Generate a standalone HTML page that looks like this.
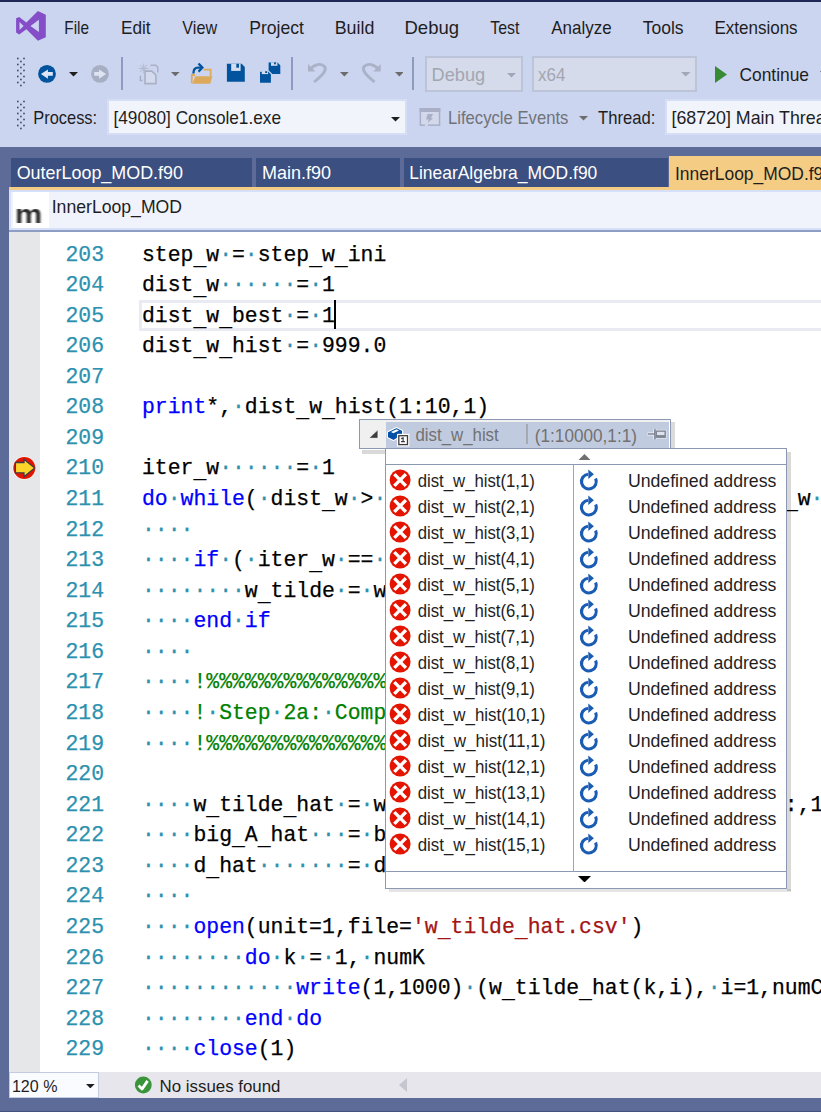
<!DOCTYPE html><html><head><meta charset="utf-8"><style>
*{margin:0;padding:0;box-sizing:border-box}
html,body{width:821px;height:1112px;overflow:hidden;background:#ccd5f0;font-family:"Liberation Sans",sans-serif;position:relative}
.a{position:absolute}
.ui{position:absolute;font-family:"Liberation Sans",sans-serif;font-size:17.4px;line-height:20px;color:#1e1e1e;white-space:pre}
.code{position:absolute;left:142.0px;font-family:"Liberation Mono",monospace;font-size:21.433px;line-height:30.57px;white-space:pre;color:#000}
.ln{position:absolute;left:0;width:104px;text-align:right;font-family:"Liberation Mono",monospace;font-size:21.433px;line-height:30.57px;color:#2b91af;white-space:pre}
.d{color:#2b91af}
.k{color:#0000ff}
.c{color:#008000}
.s{color:#a31515}
.u{position:relative;top:4px}
.code,.ln{-webkit-text-stroke:0.25px currentColor}
</style></head><body><div class="a" style="left:0px;top:0px;width:821px;height:2px;background:#1f2756;"></div><svg class="a" style="left:0;top:0" width="60" height="50" viewBox="0 0 60 50"><path fill="#854dc8" fill-rule="evenodd" d="M37.9,10.9 L45.8,14.7 L45.8,37.2 L37.9,40.8 L26.4,29.3 L19.2,34.4 L16.1,32.6 L16.1,18.3 L19.2,17 L26.4,22.6 Z M38.9,19.8 L38.9,32.1 L30.5,26 Z M19.5,21.9 L23.6,26 L19.5,30 Z"/></svg><svg class="a" style="left:0;top:0;overflow:visible" width="1" height="1"><text x="64.25" y="33.90" font-family="Liberation Sans" font-size="18.5" fill="#1e1e1e" textLength="24.76" lengthAdjust="spacingAndGlyphs" xml:space="preserve">File</text></svg><svg class="a" style="left:0;top:0;overflow:visible" width="1" height="1"><text x="120.94" y="33.90" font-family="Liberation Sans" font-size="18.5" fill="#1e1e1e" textLength="29.66" lengthAdjust="spacingAndGlyphs" xml:space="preserve">Edit</text></svg><svg class="a" style="left:0;top:0;overflow:visible" width="1" height="1"><text x="182.30" y="33.90" font-family="Liberation Sans" font-size="18.5" fill="#1e1e1e" textLength="34.80" lengthAdjust="spacingAndGlyphs" xml:space="preserve">View</text></svg><svg class="a" style="left:0;top:0;overflow:visible" width="1" height="1"><text x="249.22" y="33.90" font-family="Liberation Sans" font-size="18.5" fill="#1e1e1e" textLength="54.78" lengthAdjust="spacingAndGlyphs" xml:space="preserve">Project</text></svg><svg class="a" style="left:0;top:0;overflow:visible" width="1" height="1"><text x="334.71" y="33.90" font-family="Liberation Sans" font-size="18.5" fill="#1e1e1e" textLength="39.69" lengthAdjust="spacingAndGlyphs" xml:space="preserve">Build</text></svg><svg class="a" style="left:0;top:0;overflow:visible" width="1" height="1"><text x="404.47" y="33.90" font-family="Liberation Sans" font-size="18.5" fill="#1e1e1e" textLength="54.57" lengthAdjust="spacingAndGlyphs" xml:space="preserve">Debug</text></svg><svg class="a" style="left:0;top:0;overflow:visible" width="1" height="1"><text x="490.30" y="33.90" font-family="Liberation Sans" font-size="18.5" fill="#1e1e1e" textLength="29.20" lengthAdjust="spacingAndGlyphs" xml:space="preserve">Test</text></svg><svg class="a" style="left:0;top:0;overflow:visible" width="1" height="1"><text x="551.30" y="33.90" font-family="Liberation Sans" font-size="18.5" fill="#1e1e1e" textLength="60.31" lengthAdjust="spacingAndGlyphs" xml:space="preserve">Analyze</text></svg><svg class="a" style="left:0;top:0;overflow:visible" width="1" height="1"><text x="642.70" y="33.90" font-family="Liberation Sans" font-size="18.5" fill="#1e1e1e" textLength="40.90" lengthAdjust="spacingAndGlyphs" xml:space="preserve">Tools</text></svg><svg class="a" style="left:0;top:0;overflow:visible" width="1" height="1"><text x="714.46" y="33.90" font-family="Liberation Sans" font-size="18.5" fill="#1e1e1e" textLength="83.14" lengthAdjust="spacingAndGlyphs" xml:space="preserve">Extensions</text></svg><svg class="a" style="left:16.2px;top:56.3px" width="10" height="31" viewBox="0 0 10 31"><rect x="1" y="1.7" width="1.6" height="1.6" fill="#404662"/><rect x="7.2" y="1.7" width="1.6" height="1.6" fill="#404662"/><rect x="4.1" y="4.7" width="1.6" height="1.6" fill="#404662"/><rect x="1" y="7.7" width="1.6" height="1.6" fill="#404662"/><rect x="7.2" y="7.7" width="1.6" height="1.6" fill="#404662"/><rect x="4.1" y="10.7" width="1.6" height="1.6" fill="#404662"/><rect x="1" y="13.7" width="1.6" height="1.6" fill="#404662"/><rect x="7.2" y="13.7" width="1.6" height="1.6" fill="#404662"/><rect x="4.1" y="16.7" width="1.6" height="1.6" fill="#404662"/><rect x="1" y="19.7" width="1.6" height="1.6" fill="#404662"/><rect x="7.2" y="19.7" width="1.6" height="1.6" fill="#404662"/><rect x="4.1" y="22.7" width="1.6" height="1.6" fill="#404662"/><rect x="1" y="25.7" width="1.6" height="1.6" fill="#404662"/><rect x="7.2" y="25.7" width="1.6" height="1.6" fill="#404662"/><rect x="4.1" y="28.7" width="1.6" height="1.6" fill="#404662"/></svg><svg class="a" style="left:36px;top:62px" width="24" height="24" viewBox="0 0 24 24"><circle cx="11" cy="11.9" r="8.9" fill="#00539c"/><path d="M4.9,11.9 L11.9,7.4 L11.9,10.1 L16.8,10.1 L16.8,13.8 L11.9,13.8 L11.9,16.8 Z" fill="#dfe5f5"/></svg><svg class="a" style="left:69px;top:72px" width="9" height="4.5" viewBox="0 0 9 4.5"><path d="M0,0 L9,0 L4.5,4.5 Z" fill="#1e1e1e"/></svg><svg class="a" style="left:89px;top:62px" width="24" height="24" viewBox="0 0 24 24"><circle cx="11" cy="11.9" r="8.9" fill="#a7afc4"/><path d="M17.1,11.9 L10.1,7.4 L10.1,10.1 L5.2,10.1 L5.2,13.8 L10.1,13.8 L10.1,16.8 Z" fill="#dfe4f3"/></svg><div class="a" style="left:121.3px;top:57px;width:2px;height:33px;background:#8e9bc0;"></div><div class="a" style="left:290.9px;top:57px;width:2px;height:33px;background:#8e9bc0;"></div><div class="a" style="left:412px;top:57px;width:2px;height:33px;background:#8e9bc0;"></div><svg class="a" style="left:134px;top:58px" width="50" height="32" viewBox="0 0 50 32"><g stroke="#b3b9cb" stroke-width="1"><path d="M9.7,5.6 L9.7,15.2 M4.9,10.4 L14.5,10.4 M6.3,7 L13.1,13.8 M13.1,7 L6.3,13.8"/></g><g fill="none" stroke="#a9b0c4" stroke-width="1.5"><path d="M16.4,7.3 L21.8,7.3 L23.8,9.3 L23.8,14.6"/><path d="M6.4,17.7 L6.4,22.5 L8.5,22.5"/></g><path d="M11,13.1 L17.7,13.1 L21.9,17 L21.9,25.6 L11,25.6 Z" fill="#d4dbee" stroke="#a9b0c4" stroke-width="1.6"/></svg><svg class="a" style="left:171.1px;top:72px" width="8.6" height="4.3" viewBox="0 0 8.6 4.3"><path d="M0,0 L8.6,0 L4.3,4.3 Z" fill="#6b6b6b"/></svg><svg class="a" style="left:186px;top:58px" width="64" height="32" viewBox="0 0 64 32"><path d="M5.8,16 L5.8,25.3 M5.8,17 L9,17 M17.5,11.7 L24.6,11.7 L24.6,18.3" fill="none" stroke="#dcaa5a" stroke-width="1.8"/><path d="M9.4,18.3 L26.5,18.3 L24.2,25.8 L6.5,25.8 Z" fill="#dcaa5a"/><path d="M7.4,15.5 C7.4,11.5 9.5,9.7 12,9.7 L16,9.7" fill="none" stroke="#00539c" stroke-width="2.3"/><path d="M12.5,5.5 L16.4,9.6 L12.5,13.6" fill="none" stroke="#00539c" stroke-width="2.3"/><path d="M40.9,5.8 L55.7,5.8 L58.8,9 L58.8,23.8 L40.9,23.8 Z" fill="#00539c"/><rect x="45.2" y="5.8" width="9.4" height="7.1" fill="#d5dcef"/><rect x="50.3" y="5.8" width="2.7" height="3.9" fill="#00539c"/></svg><svg class="a" style="left:254px;top:58px" width="40" height="32" viewBox="0 0 40 32"><path d="M14.6,4.4 L23.4,4.4 L26.3,7.3 L26.3,16.1 L14.6,16.1 Z" fill="#00539c"/><rect x="17" y="4.4" width="6.4" height="3.4" fill="#d5dcef"/><rect x="20" y="4.4" width="1.9" height="1.9" fill="#00539c"/><path d="M5.4,13.2 L14.6,13.2 L17.5,16.1 L17.5,25.3 L5.4,25.3 Z" fill="#00539c" stroke="#ccd5f0" stroke-width="1.2"/><rect x="7.8" y="13.2" width="6.3" height="2.9" fill="#d5dcef"/><rect x="11.2" y="13.2" width="2" height="1.8" fill="#00539c"/></svg><svg class="a" style="left:300px;top:56px" width="110" height="34" viewBox="0 0 110 34"><path d="M8,8 L8,15.4 L15.4,15.4 Z" fill="#aab2c7"/><path d="M10.5,13.2 C14,8.5 21,6.5 24.5,10.5 C27,13.5 24,18 14.1,26" fill="none" stroke="#aab2c7" stroke-width="2.8"/><g transform="translate(88.7,0) scale(-1,1)"><path d="M8,8 L8,15.4 L15.4,15.4 Z" fill="#aab2c7"/><path d="M10.5,13.2 C14,8.5 21,6.5 24.5,10.5 C27,13.5 24,18 14.1,26" fill="none" stroke="#aab2c7" stroke-width="2.8"/></g></svg><svg class="a" style="left:340.2px;top:72.1px" width="8.7" height="4.5" viewBox="0 0 8.7 4.5"><path d="M0,0 L8.7,0 L4.35,4.5 Z" fill="#6b6b6b"/></svg><svg class="a" style="left:394.5px;top:72.1px" width="8.7" height="4.5" viewBox="0 0 8.7 4.5"><path d="M0,0 L8.7,0 L4.35,4.5 Z" fill="#6b6b6b"/></svg><div class="a" style="left:425px;top:56px;width:98px;height:35.7px;background:#d5dbea;border:2px solid #bcc4d9"></div><svg class="a" style="left:0;top:0;overflow:visible" width="1" height="1"><text x="431.59" y="80.80" font-family="Liberation Sans" font-size="18.5" fill="#a2a6b1" textLength="53.63" lengthAdjust="spacingAndGlyphs" xml:space="preserve">Debug</text></svg><svg class="a" style="left:507px;top:73px" width="9" height="4.5" viewBox="0 0 9 4.5"><path d="M0,0 L9,0 L4.5,4.5 Z" fill="#a0a7b8"/></svg><div class="a" style="left:532px;top:56px;width:164.5px;height:35.7px;background:#d5dbea;border:2px solid #bcc4d9"></div><svg class="a" style="left:0;top:0;overflow:visible" width="1" height="1"><text x="538.10" y="80.80" font-family="Liberation Sans" font-size="18.5" fill="#a2a6b1" textLength="27.31" lengthAdjust="spacingAndGlyphs" xml:space="preserve">x64</text></svg><svg class="a" style="left:681px;top:72px" width="9.5" height="4.5" viewBox="0 0 9.5 4.5"><path d="M0,0 L9.5,0 L4.75,4.5 Z" fill="#a0a7b8"/></svg><svg class="a" style="left:714px;top:65px" width="14" height="19" viewBox="0 0 14 19"><path d="M1,1 L13,9.5 L1,18 Z" fill="#388a34"/></svg><svg class="a" style="left:0;top:0;overflow:visible" width="1" height="1"><text x="739.50" y="81.20" font-family="Liberation Sans" font-size="18.5" fill="#1e1e1e" textLength="69.51" lengthAdjust="spacingAndGlyphs" xml:space="preserve">Continue</text></svg><svg class="a" style="left:819.8px;top:71px" width="9" height="4.5" viewBox="0 0 9 4.5"><path d="M0,0 L9,0 L4.5,4.5 Z" fill="#3c3c3c"/></svg><svg class="a" style="left:16.2px;top:99.3px" width="10" height="31" viewBox="0 0 10 31"><rect x="1" y="1.7" width="1.6" height="1.6" fill="#404662"/><rect x="7.2" y="1.7" width="1.6" height="1.6" fill="#404662"/><rect x="4.1" y="4.7" width="1.6" height="1.6" fill="#404662"/><rect x="1" y="7.7" width="1.6" height="1.6" fill="#404662"/><rect x="7.2" y="7.7" width="1.6" height="1.6" fill="#404662"/><rect x="4.1" y="10.7" width="1.6" height="1.6" fill="#404662"/><rect x="1" y="13.7" width="1.6" height="1.6" fill="#404662"/><rect x="7.2" y="13.7" width="1.6" height="1.6" fill="#404662"/><rect x="4.1" y="16.7" width="1.6" height="1.6" fill="#404662"/><rect x="1" y="19.7" width="1.6" height="1.6" fill="#404662"/><rect x="7.2" y="19.7" width="1.6" height="1.6" fill="#404662"/><rect x="4.1" y="22.7" width="1.6" height="1.6" fill="#404662"/><rect x="1" y="25.7" width="1.6" height="1.6" fill="#404662"/><rect x="7.2" y="25.7" width="1.6" height="1.6" fill="#404662"/><rect x="4.1" y="28.7" width="1.6" height="1.6" fill="#404662"/></svg><svg class="a" style="left:0;top:0;overflow:visible" width="1" height="1"><text x="33.29" y="123.60" font-family="Liberation Sans" font-size="18.5" fill="#1e1e1e" textLength="63.82" lengthAdjust="spacingAndGlyphs" xml:space="preserve">Process:</text></svg><div class="a" style="left:106.7px;top:98.7px;width:300.3px;height:36.5px;background:#f2f4fc;border:2px solid #d6def6"></div><svg class="a" style="left:0;top:0;overflow:visible" width="1" height="1"><text x="113.44" y="123.60" font-family="Liberation Sans" font-size="18.5" fill="#1e1e1e" textLength="167.57" lengthAdjust="spacingAndGlyphs" xml:space="preserve">[49080] Console1.exe</text></svg><svg class="a" style="left:391px;top:117px" width="9" height="4.5" viewBox="0 0 9 4.5"><path d="M0,0 L9,0 L4.5,4.5 Z" fill="#1e1e1e"/></svg><svg class="a" style="left:412px;top:100px" width="40" height="32" viewBox="0 0 40 32"><rect x="8.35" y="8.75" width="19.2" height="16.4" fill="#d3d9ea" stroke="#a8afc6" stroke-width="1.5"/><rect x="7.6" y="8" width="20.7" height="4" fill="#a8afc6"/><rect x="12.9" y="24" width="3.2" height="2.5" fill="#ccd5f0"/><path d="M15.6,14.1 L21,14.1 L19,18 L21,18.3 L15.6,22.9 L16.8,19.5 L14.1,19.5 Z" fill="#a8afc6"/></svg><svg class="a" style="left:0;top:0;overflow:visible" width="1" height="1"><text x="447.97" y="123.90" font-family="Liberation Sans" font-size="18.5" fill="#707378" textLength="120.43" lengthAdjust="spacingAndGlyphs" xml:space="preserve">Lifecycle Events</text></svg><svg class="a" style="left:579px;top:116px" width="9" height="4.5" viewBox="0 0 9 4.5"><path d="M0,0 L9,0 L4.5,4.5 Z" fill="#6d6d6d"/></svg><svg class="a" style="left:0;top:0;overflow:visible" width="1" height="1"><text x="598.10" y="123.80" font-family="Liberation Sans" font-size="18.5" fill="#1e1e1e" textLength="57.22" lengthAdjust="spacingAndGlyphs" xml:space="preserve">Thread:</text></svg><div class="a" style="left:665.3px;top:98.7px;width:170px;height:36.5px;background:#f2f4fc;border:2px solid #d6def6"></div><svg class="a" style="left:0;top:0;overflow:visible" width="1" height="1"><text x="671.51" y="123.80" font-family="Liberation Sans" font-size="18.5" fill="#1e1e1e" textLength="163.99" lengthAdjust="spacingAndGlyphs" xml:space="preserve">[68720] Main Thread</text></svg><div class="a" style="left:0px;top:147px;width:821px;height:41px;background:#5d6b99;"></div><div class="a" style="left:11px;top:158px;width:241px;height:29px;background:#3b4f81;"></div><svg class="a" style="left:0;top:0;overflow:visible" width="1" height="1"><text x="16.70" y="178.90" font-family="Liberation Sans" font-size="18.5" fill="#ffffff" textLength="166.31" lengthAdjust="spacingAndGlyphs" xml:space="preserve">OuterLoop_MOD.f90</text></svg><div class="a" style="left:256px;top:158px;width:144px;height:29px;background:#3b4f81;"></div><svg class="a" style="left:0;top:0;overflow:visible" width="1" height="1"><text x="262.00" y="178.60" font-family="Liberation Sans" font-size="18.5" fill="#ffffff" textLength="69.01" lengthAdjust="spacingAndGlyphs" xml:space="preserve">Main.f90</text></svg><div class="a" style="left:403.5px;top:158px;width:264px;height:29px;background:#3b4f81;"></div><svg class="a" style="left:0;top:0;overflow:visible" width="1" height="1"><text x="409.23" y="178.90" font-family="Liberation Sans" font-size="18.5" fill="#ffffff" textLength="188.08" lengthAdjust="spacingAndGlyphs" xml:space="preserve">LinearAlgebra_MOD.f90</text></svg><div class="a" style="left:669px;top:156px;width:160px;height:32px;background:#f5cc84;"></div><svg class="a" style="left:0;top:0;overflow:visible" width="1" height="1"><text x="675.03" y="179.80" font-family="Liberation Sans" font-size="18.5" fill="#1e1e1e" textLength="157.98" lengthAdjust="spacingAndGlyphs" xml:space="preserve">InnerLoop_MOD.f90</text></svg><div class="a" style="left:9px;top:187px;width:812px;height:2.8px;background:#f5cc84;"></div><div class="a" style="left:0px;top:147px;width:9px;height:965px;background:#5d6b99;"></div><div class="a" style="left:0px;top:1097.5px;width:821px;height:14.5px;background:#5d6b99;"></div><div class="a" style="left:0px;top:1110.5px;width:821px;height:1.5px;background:#42507f;"></div><div class="a" style="left:9px;top:189.8px;width:812px;height:42px;background:#d6e1f9;"></div><div class="a" style="left:11px;top:192px;width:810px;height:36.3px;background:#f0f3fc;"></div><div class="a" style="left:12.7px;top:192px;width:36.3px;height:36px;background:#ffffff;"></div><div class="a" style="left:14.5px;top:200.5px;font-family:Liberation Sans,sans-serif;font-weight:bold;font-size:25.5px;line-height:25.5px;color:#2a2a2a;transform:scale(1.2,1.03);transform-origin:0 0;filter:blur(0.7px)">m</div><svg class="a" style="left:0;top:0;overflow:visible" width="1" height="1"><text x="51.72" y="213.00" font-family="Liberation Sans" font-size="18.5" fill="#1e1e1e" textLength="130.28" lengthAdjust="spacingAndGlyphs" xml:space="preserve">InnerLoop_MOD</text></svg><div class="a" style="left:9px;top:230px;width:812px;height:2px;background:#8e9dc4;"></div><div class="a" style="left:9px;top:232px;width:812px;height:840px;background:#ffffff;"></div><div class="a" style="left:9px;top:232px;width:30.5px;height:840px;background:#e6e7e8;"></div><div class="a" style="left:139px;top:300px;width:700px;height:30.7px;background:transparent;border:3px solid #eaeaf2;border-right:none"></div><div class="ln" style="top:239.50px">203</div><div class="code" style="top:239.50px">step<span class="u">_</span>w<span class="d">·</span>=<span class="d">·</span>step<span class="u">_</span>w<span class="u">_</span>ini</div><div class="ln" style="top:270.07px">204</div><div class="code" style="top:270.07px">dist<span class="u">_</span>w<span class="d">······</span>=<span class="d">·</span>1</div><div class="ln" style="top:300.64px">205</div><div class="code" style="top:300.64px">dist<span class="u">_</span>w<span class="u">_</span>best<span class="d">·</span>=<span class="d">·</span>1</div><div class="ln" style="top:331.21px">206</div><div class="code" style="top:331.21px">dist<span class="u">_</span>w<span class="u">_</span>hist<span class="d">·</span>=<span class="d">·</span>999.0</div><div class="ln" style="top:361.78px">207</div><div class="ln" style="top:392.35px">208</div><div class="code" style="top:392.35px"><span class="k">print</span>*,<span class="d">·</span>dist<span class="u">_</span>w<span class="u">_</span>hist(1:10,1)</div><div class="ln" style="top:422.92px">209</div><div class="ln" style="top:453.49px">210</div><div class="code" style="top:453.49px">iter<span class="u">_</span>w<span class="d">······</span>=<span class="d">·</span>1</div><div class="ln" style="top:484.06px">211</div><div class="code" style="top:484.06px"><span class="k">do</span><span class="d">·</span><span class="k">while</span>(<span class="d">·</span>dist<span class="u">_</span>w<span class="d">·</span>&gt;<span class="d">·</span>tol<span class="u">_</span>w<span class="d">·</span>.and.<span class="d">·</span>iter<span class="u">_</span>w<span class="d">··</span>&lt;<span class="d">··</span>max<span class="u">_</span>iter<span class="u">_</span>w<span class="d">·</span>)</div><div class="ln" style="top:514.63px">212</div><div class="code" style="top:514.63px"><span class="d">····</span></div><div class="ln" style="top:545.20px">213</div><div class="code" style="top:545.20px"><span class="d">····</span><span class="k">if</span><span class="d">·</span>(<span class="d">·</span>iter<span class="u">_</span>w<span class="d">·</span>==<span class="d">·</span>1<span class="d">·</span>)<span class="d">·</span><span class="k">then</span></div><div class="ln" style="top:575.77px">214</div><div class="code" style="top:575.77px"><span class="d">········</span>w<span class="u">_</span>tilde<span class="d">·</span>=<span class="d">·</span>w</div><div class="ln" style="top:606.34px">215</div><div class="code" style="top:606.34px"><span class="d">····</span><span class="k">end</span><span class="d">·</span><span class="k">if</span></div><div class="ln" style="top:636.91px">216</div><div class="code" style="top:636.91px"><span class="d">····</span></div><div class="ln" style="top:667.48px">217</div><div class="code" style="top:667.48px"><span class="d">····</span><span class="c">!%%%%%%%%%%%%%%%%%%%%%%%%%%%%%%%%%%%%%%</span></div><div class="ln" style="top:698.05px">218</div><div class="code" style="top:698.05px"><span class="d">····</span><span class="c">!<span class="d">·</span>Step<span class="d">·</span>2a:<span class="d">·</span>Compute</span></div><div class="ln" style="top:728.62px">219</div><div class="code" style="top:728.62px"><span class="d">····</span><span class="c">!%%%%%%%%%%%%%%%%%%%%%%%%%%%%%%%%%%%%%%</span></div><div class="ln" style="top:759.19px">220</div><div class="ln" style="top:789.76px">221</div><div class="code" style="top:789.76px"><span class="d">····</span>w<span class="u">_</span>tilde<span class="u">_</span>hat<span class="d">·</span>=<span class="d">·</span>w<span class="u">_</span>tilde<span class="u">_</span>best(1:numK,1:numCCCC,:,:,1)</div><div class="ln" style="top:820.33px">222</div><div class="code" style="top:820.33px"><span class="d">····</span>big<span class="u">_</span>A<span class="u">_</span>hat<span class="d">···</span>=<span class="d">·</span>b</div><div class="ln" style="top:850.90px">223</div><div class="code" style="top:850.90px"><span class="d">····</span>d<span class="u">_</span>hat<span class="d">·······</span>=<span class="d">·</span>d</div><div class="ln" style="top:881.47px">224</div><div class="code" style="top:881.47px"><span class="d">····</span></div><div class="ln" style="top:912.04px">225</div><div class="code" style="top:912.04px"><span class="d">····</span><span class="k">open</span>(unit=1,file=<span class="s">'w<span class="u">_</span>tilde<span class="u">_</span>hat.csv'</span>)</div><div class="ln" style="top:942.61px">226</div><div class="code" style="top:942.61px"><span class="d">········</span><span class="k">do</span><span class="d">·</span>k<span class="d">·</span>=<span class="d">·</span>1,<span class="d">·</span>numK</div><div class="ln" style="top:973.18px">227</div><div class="code" style="top:973.18px"><span class="d">············</span><span class="k">write</span>(1,1000)<span class="d">·</span>(w<span class="u">_</span>tilde<span class="u">_</span>hat(k,i),<span class="d">·</span>i=1,numC)</div><div class="ln" style="top:1003.75px">228</div><div class="code" style="top:1003.75px"><span class="d">········</span><span class="k">end</span><span class="d">·</span><span class="k">do</span></div><div class="ln" style="top:1034.32px">229</div><div class="code" style="top:1034.32px"><span class="d">····</span><span class="k">close</span>(1)</div><div class="a" style="left:334.4px;top:300px;width:2.1px;height:28.6px;background:#000;"></div><svg class="a" style="left:10px;top:454px" width="29" height="29" viewBox="0 0 29 29"><circle cx="14.3" cy="14" r="11.8" fill="#f4f6f6"/><circle cx="14.3" cy="14" r="11" fill="#e51400"/><path d="M5.4,8.5 L14,8.5 L14,5.3 L24.7,14 L14,22.8 L14,18.8 L5.4,18.8 Z" fill="#ffd42a" stroke="#3c3c46" stroke-width="1.3" stroke-linejoin="miter"/></svg><div class="a" style="left:9px;top:1072px;width:812px;height:25.5px;background:#e6e6ec;"></div><div class="a" style="left:9px;top:1072px;width:89.5px;height:25.5px;background:#fafbfe;border:1px solid #c3cbe2"></div><svg class="a" style="left:0;top:0;overflow:visible" width="1" height="1"><text x="11.91" y="1092.00" font-family="Liberation Sans" font-size="16.5" fill="#1e1e1e" textLength="45.50" lengthAdjust="spacingAndGlyphs" xml:space="preserve">120 %</text></svg><svg class="a" style="left:86px;top:1084px" width="8.7" height="4.4" viewBox="0 0 8.7 4.4"><path d="M0,0 L8.7,0 L4.35,4.4 Z" fill="#1e1e1e"/></svg><svg class="a" style="left:134px;top:1076px" width="19" height="19" viewBox="0 0 19 19"><circle cx="9.3" cy="9" r="8.4" fill="#3a953a"/><path d="M4.6,9.6 L8,13.1 L13.6,4.9" fill="none" stroke="#fff" stroke-width="2.8" stroke-linejoin="round"/></svg><svg class="a" style="left:0;top:0;overflow:visible" width="1" height="1"><text x="159.56" y="1092.00" font-family="Liberation Sans" font-size="16.5" fill="#1e1e1e" textLength="120.88" lengthAdjust="spacingAndGlyphs" xml:space="preserve">No issues found</text></svg><svg class="a" style="left:399px;top:1078px" width="9" height="14" viewBox="0 0 9 14"><path d="M8,0 L8,14 L0,7 Z" fill="#c6c6d0"/></svg><div class="a" style="left:359px;top:419px;width:312px;height:30px;background:#f0f0f0;border:1px solid #8d98b3"></div><div class="a" style="left:669px;top:420px;width:1px;height:28px;background:#ffffff;"></div><div class="a" style="left:386px;top:422px;width:283px;height:26px;background:#c1cbe0;"></div><div class="a" style="left:671px;top:422px;width:4px;height:26px;background:rgba(0,0,0,0.14);"></div><div class="a" style="left:362px;top:450px;width:23px;height:4px;background:rgba(0,0,0,0.15);"></div><svg class="a" style="left:362px;top:422px" width="20" height="20" viewBox="0 0 20 20"><path d="M6.8,16.3 L16,7.6 L16,16.3 Z" fill="#3c3c3c" stroke="#fff" stroke-width="0.8" stroke-linejoin="round"/></svg><svg class="a" style="left:384px;top:422px" width="28" height="26" viewBox="0 0 28 26"><path d="M3.4,9.9 L12.5,5.5 L18.6,8.4 L18.6,13 L9.4,18.6 L3.4,15.5 Z" fill="#0050a8" stroke="#fff" stroke-width="1.1" stroke-linejoin="round"/><path d="M7,9.9 L12.5,7.3 L15,8.4 L9.4,11.3 Z" fill="#fff"/><rect x="14.2" y="13.1" width="9.9" height="10.1" fill="#fff" stroke="#fff" stroke-width="2.5"/><rect x="14.8" y="13.7" width="8.7" height="8.9" fill="#fff" stroke="#3c3c3c" stroke-width="1.3"/><path d="M17.1,16.6 L19.1,15.9 L19.1,19.6 M17,19.6 L20.9,19.6" fill="none" stroke="#3c3c3c" stroke-width="1.2"/></svg><svg class="a" style="left:0;top:0;overflow:visible" width="1" height="1"><text x="415.50" y="441.20" font-family="Liberation Sans" font-size="18.5" fill="#717171" textLength="83.20" lengthAdjust="spacingAndGlyphs" xml:space="preserve">dist_w_hist</text></svg><div class="a" style="left:526.2px;top:424px;width:1.7px;height:19.7px;background:#a4a9b4;"></div><svg class="a" style="left:0;top:0;overflow:visible" width="1" height="1"><text x="534.85" y="441.50" font-family="Liberation Sans" font-size="18.5" fill="#717171" textLength="102.10" lengthAdjust="spacingAndGlyphs" xml:space="preserve">(1:10000,1:1)</text></svg><svg class="a" style="left:640px;top:422px" width="30" height="24" viewBox="0 0 30 24"><path d="M7.5,12 L14.5,12 M14.8,7.1 L14.8,17.3" stroke="#e3e8f2" stroke-width="3.5" fill="none"/><rect x="14.8" y="7.8" width="11.8" height="8.8" fill="#e3e8f2"/><path d="M8,12 L14.5,12" stroke="#7d8390" stroke-width="1.4"/><rect x="14.1" y="7.1" width="1.6" height="10.2" fill="#7d8390"/><rect x="15.6" y="8.5" width="10.3" height="7.4" fill="#7d8390"/><rect x="17" y="9.8" width="7.5" height="3.3" fill="#dde3ee"/></svg><div class="a" style="left:385px;top:448px;width:402px;height:440.5px;background:#ffffff;border:1px solid #8d98b3"></div><div class="a" style="left:787px;top:452px;width:4px;height:439px;background:rgba(0,0,0,0.15);"></div><div class="a" style="left:389px;top:889px;width:402px;height:3px;background:rgba(0,0,0,0.10);"></div><div class="a" style="left:386px;top:464px;width:400px;height:1px;background:#8d98b3;"></div><svg class="a" style="left:577.5px;top:453.5px" width="13" height="6.5" viewBox="0 0 13 6.5"><path d="M0,6.5 L13,6.5 L6.5,0 Z" fill="#707070"/></svg><div class="a" style="left:386px;top:871px;width:400px;height:1px;background:#8d98b3;"></div><div class="a" style="left:572.5px;top:464.5px;width:1.5px;height:407px;background:#9ea6bd;"></div><svg class="a" style="left:388px;top:468.0px" width="24" height="24" viewBox="0 0 24 24"><circle cx="12.1" cy="12" r="10.45" fill="#e51400"/><path d="M6.3,6.1 L17.9,17.9 M17.9,6.1 L6.3,17.9" stroke="#fff" stroke-width="3.4"/></svg><svg class="a" style="left:0;top:0;overflow:visible" width="1" height="1"><text x="417.70" y="486.60" font-family="Liberation Sans" font-size="18.5" fill="#1e1e1e" textLength="117.22" lengthAdjust="spacingAndGlyphs" xml:space="preserve">dist_w_hist(1,1)</text></svg><svg class="a" style="left:576px;top:468.0px" width="24" height="24" viewBox="0 0 24 24"><path d="M19.6,10.5 A7.4,7.4 0 1 1 12,6.2" fill="none" stroke="#1a5cb4" stroke-width="3.1"/><path d="M12.3,1.5 L17.9,6.2 L12.3,10.9 Z" fill="#1a5cb4"/></svg><svg class="a" style="left:0;top:0;overflow:visible" width="1" height="1"><text x="627.92" y="486.60" font-family="Liberation Sans" font-size="18.5" fill="#1e1e1e" textLength="148.48" lengthAdjust="spacingAndGlyphs" xml:space="preserve">Undefined address</text></svg><svg class="a" style="left:388px;top:494.0px" width="24" height="24" viewBox="0 0 24 24"><circle cx="12.1" cy="12" r="10.45" fill="#e51400"/><path d="M6.3,6.1 L17.9,17.9 M17.9,6.1 L6.3,17.9" stroke="#fff" stroke-width="3.4"/></svg><svg class="a" style="left:0;top:0;overflow:visible" width="1" height="1"><text x="417.70" y="512.65" font-family="Liberation Sans" font-size="18.5" fill="#1e1e1e" textLength="117.22" lengthAdjust="spacingAndGlyphs" xml:space="preserve">dist_w_hist(2,1)</text></svg><svg class="a" style="left:576px;top:494.0px" width="24" height="24" viewBox="0 0 24 24"><path d="M19.6,10.5 A7.4,7.4 0 1 1 12,6.2" fill="none" stroke="#1a5cb4" stroke-width="3.1"/><path d="M12.3,1.5 L17.9,6.2 L12.3,10.9 Z" fill="#1a5cb4"/></svg><svg class="a" style="left:0;top:0;overflow:visible" width="1" height="1"><text x="627.92" y="512.65" font-family="Liberation Sans" font-size="18.5" fill="#1e1e1e" textLength="148.48" lengthAdjust="spacingAndGlyphs" xml:space="preserve">Undefined address</text></svg><svg class="a" style="left:388px;top:520.0px" width="24" height="24" viewBox="0 0 24 24"><circle cx="12.1" cy="12" r="10.45" fill="#e51400"/><path d="M6.3,6.1 L17.9,17.9 M17.9,6.1 L6.3,17.9" stroke="#fff" stroke-width="3.4"/></svg><svg class="a" style="left:0;top:0;overflow:visible" width="1" height="1"><text x="417.70" y="538.70" font-family="Liberation Sans" font-size="18.5" fill="#1e1e1e" textLength="117.22" lengthAdjust="spacingAndGlyphs" xml:space="preserve">dist_w_hist(3,1)</text></svg><svg class="a" style="left:576px;top:520.0px" width="24" height="24" viewBox="0 0 24 24"><path d="M19.6,10.5 A7.4,7.4 0 1 1 12,6.2" fill="none" stroke="#1a5cb4" stroke-width="3.1"/><path d="M12.3,1.5 L17.9,6.2 L12.3,10.9 Z" fill="#1a5cb4"/></svg><svg class="a" style="left:0;top:0;overflow:visible" width="1" height="1"><text x="627.92" y="538.70" font-family="Liberation Sans" font-size="18.5" fill="#1e1e1e" textLength="148.48" lengthAdjust="spacingAndGlyphs" xml:space="preserve">Undefined address</text></svg><svg class="a" style="left:388px;top:546.0px" width="24" height="24" viewBox="0 0 24 24"><circle cx="12.1" cy="12" r="10.45" fill="#e51400"/><path d="M6.3,6.1 L17.9,17.9 M17.9,6.1 L6.3,17.9" stroke="#fff" stroke-width="3.4"/></svg><svg class="a" style="left:0;top:0;overflow:visible" width="1" height="1"><text x="417.70" y="564.75" font-family="Liberation Sans" font-size="18.5" fill="#1e1e1e" textLength="117.22" lengthAdjust="spacingAndGlyphs" xml:space="preserve">dist_w_hist(4,1)</text></svg><svg class="a" style="left:576px;top:546.0px" width="24" height="24" viewBox="0 0 24 24"><path d="M19.6,10.5 A7.4,7.4 0 1 1 12,6.2" fill="none" stroke="#1a5cb4" stroke-width="3.1"/><path d="M12.3,1.5 L17.9,6.2 L12.3,10.9 Z" fill="#1a5cb4"/></svg><svg class="a" style="left:0;top:0;overflow:visible" width="1" height="1"><text x="627.92" y="564.75" font-family="Liberation Sans" font-size="18.5" fill="#1e1e1e" textLength="148.48" lengthAdjust="spacingAndGlyphs" xml:space="preserve">Undefined address</text></svg><svg class="a" style="left:388px;top:572.0px" width="24" height="24" viewBox="0 0 24 24"><circle cx="12.1" cy="12" r="10.45" fill="#e51400"/><path d="M6.3,6.1 L17.9,17.9 M17.9,6.1 L6.3,17.9" stroke="#fff" stroke-width="3.4"/></svg><svg class="a" style="left:0;top:0;overflow:visible" width="1" height="1"><text x="417.70" y="590.80" font-family="Liberation Sans" font-size="18.5" fill="#1e1e1e" textLength="117.22" lengthAdjust="spacingAndGlyphs" xml:space="preserve">dist_w_hist(5,1)</text></svg><svg class="a" style="left:576px;top:572.0px" width="24" height="24" viewBox="0 0 24 24"><path d="M19.6,10.5 A7.4,7.4 0 1 1 12,6.2" fill="none" stroke="#1a5cb4" stroke-width="3.1"/><path d="M12.3,1.5 L17.9,6.2 L12.3,10.9 Z" fill="#1a5cb4"/></svg><svg class="a" style="left:0;top:0;overflow:visible" width="1" height="1"><text x="627.92" y="590.80" font-family="Liberation Sans" font-size="18.5" fill="#1e1e1e" textLength="148.48" lengthAdjust="spacingAndGlyphs" xml:space="preserve">Undefined address</text></svg><svg class="a" style="left:388px;top:598.0px" width="24" height="24" viewBox="0 0 24 24"><circle cx="12.1" cy="12" r="10.45" fill="#e51400"/><path d="M6.3,6.1 L17.9,17.9 M17.9,6.1 L6.3,17.9" stroke="#fff" stroke-width="3.4"/></svg><svg class="a" style="left:0;top:0;overflow:visible" width="1" height="1"><text x="417.70" y="616.85" font-family="Liberation Sans" font-size="18.5" fill="#1e1e1e" textLength="117.22" lengthAdjust="spacingAndGlyphs" xml:space="preserve">dist_w_hist(6,1)</text></svg><svg class="a" style="left:576px;top:598.0px" width="24" height="24" viewBox="0 0 24 24"><path d="M19.6,10.5 A7.4,7.4 0 1 1 12,6.2" fill="none" stroke="#1a5cb4" stroke-width="3.1"/><path d="M12.3,1.5 L17.9,6.2 L12.3,10.9 Z" fill="#1a5cb4"/></svg><svg class="a" style="left:0;top:0;overflow:visible" width="1" height="1"><text x="627.92" y="616.85" font-family="Liberation Sans" font-size="18.5" fill="#1e1e1e" textLength="148.48" lengthAdjust="spacingAndGlyphs" xml:space="preserve">Undefined address</text></svg><svg class="a" style="left:388px;top:624.0px" width="24" height="24" viewBox="0 0 24 24"><circle cx="12.1" cy="12" r="10.45" fill="#e51400"/><path d="M6.3,6.1 L17.9,17.9 M17.9,6.1 L6.3,17.9" stroke="#fff" stroke-width="3.4"/></svg><svg class="a" style="left:0;top:0;overflow:visible" width="1" height="1"><text x="417.70" y="642.90" font-family="Liberation Sans" font-size="18.5" fill="#1e1e1e" textLength="117.22" lengthAdjust="spacingAndGlyphs" xml:space="preserve">dist_w_hist(7,1)</text></svg><svg class="a" style="left:576px;top:624.0px" width="24" height="24" viewBox="0 0 24 24"><path d="M19.6,10.5 A7.4,7.4 0 1 1 12,6.2" fill="none" stroke="#1a5cb4" stroke-width="3.1"/><path d="M12.3,1.5 L17.9,6.2 L12.3,10.9 Z" fill="#1a5cb4"/></svg><svg class="a" style="left:0;top:0;overflow:visible" width="1" height="1"><text x="627.92" y="642.90" font-family="Liberation Sans" font-size="18.5" fill="#1e1e1e" textLength="148.48" lengthAdjust="spacingAndGlyphs" xml:space="preserve">Undefined address</text></svg><svg class="a" style="left:388px;top:650.0px" width="24" height="24" viewBox="0 0 24 24"><circle cx="12.1" cy="12" r="10.45" fill="#e51400"/><path d="M6.3,6.1 L17.9,17.9 M17.9,6.1 L6.3,17.9" stroke="#fff" stroke-width="3.4"/></svg><svg class="a" style="left:0;top:0;overflow:visible" width="1" height="1"><text x="417.70" y="668.95" font-family="Liberation Sans" font-size="18.5" fill="#1e1e1e" textLength="117.22" lengthAdjust="spacingAndGlyphs" xml:space="preserve">dist_w_hist(8,1)</text></svg><svg class="a" style="left:576px;top:650.0px" width="24" height="24" viewBox="0 0 24 24"><path d="M19.6,10.5 A7.4,7.4 0 1 1 12,6.2" fill="none" stroke="#1a5cb4" stroke-width="3.1"/><path d="M12.3,1.5 L17.9,6.2 L12.3,10.9 Z" fill="#1a5cb4"/></svg><svg class="a" style="left:0;top:0;overflow:visible" width="1" height="1"><text x="627.92" y="668.95" font-family="Liberation Sans" font-size="18.5" fill="#1e1e1e" textLength="148.48" lengthAdjust="spacingAndGlyphs" xml:space="preserve">Undefined address</text></svg><svg class="a" style="left:388px;top:676.0px" width="24" height="24" viewBox="0 0 24 24"><circle cx="12.1" cy="12" r="10.45" fill="#e51400"/><path d="M6.3,6.1 L17.9,17.9 M17.9,6.1 L6.3,17.9" stroke="#fff" stroke-width="3.4"/></svg><svg class="a" style="left:0;top:0;overflow:visible" width="1" height="1"><text x="417.70" y="695.00" font-family="Liberation Sans" font-size="18.5" fill="#1e1e1e" textLength="117.22" lengthAdjust="spacingAndGlyphs" xml:space="preserve">dist_w_hist(9,1)</text></svg><svg class="a" style="left:576px;top:676.0px" width="24" height="24" viewBox="0 0 24 24"><path d="M19.6,10.5 A7.4,7.4 0 1 1 12,6.2" fill="none" stroke="#1a5cb4" stroke-width="3.1"/><path d="M12.3,1.5 L17.9,6.2 L12.3,10.9 Z" fill="#1a5cb4"/></svg><svg class="a" style="left:0;top:0;overflow:visible" width="1" height="1"><text x="627.92" y="695.00" font-family="Liberation Sans" font-size="18.5" fill="#1e1e1e" textLength="148.48" lengthAdjust="spacingAndGlyphs" xml:space="preserve">Undefined address</text></svg><svg class="a" style="left:388px;top:702.0px" width="24" height="24" viewBox="0 0 24 24"><circle cx="12.1" cy="12" r="10.45" fill="#e51400"/><path d="M6.3,6.1 L17.9,17.9 M17.9,6.1 L6.3,17.9" stroke="#fff" stroke-width="3.4"/></svg><svg class="a" style="left:0;top:0;overflow:visible" width="1" height="1"><text x="417.70" y="721.05" font-family="Liberation Sans" font-size="18.5" fill="#1e1e1e" textLength="127.63" lengthAdjust="spacingAndGlyphs" xml:space="preserve">dist_w_hist(10,1)</text></svg><svg class="a" style="left:576px;top:702.0px" width="24" height="24" viewBox="0 0 24 24"><path d="M19.6,10.5 A7.4,7.4 0 1 1 12,6.2" fill="none" stroke="#1a5cb4" stroke-width="3.1"/><path d="M12.3,1.5 L17.9,6.2 L12.3,10.9 Z" fill="#1a5cb4"/></svg><svg class="a" style="left:0;top:0;overflow:visible" width="1" height="1"><text x="627.92" y="721.05" font-family="Liberation Sans" font-size="18.5" fill="#1e1e1e" textLength="148.48" lengthAdjust="spacingAndGlyphs" xml:space="preserve">Undefined address</text></svg><svg class="a" style="left:388px;top:728.0px" width="24" height="24" viewBox="0 0 24 24"><circle cx="12.1" cy="12" r="10.45" fill="#e51400"/><path d="M6.3,6.1 L17.9,17.9 M17.9,6.1 L6.3,17.9" stroke="#fff" stroke-width="3.4"/></svg><svg class="a" style="left:0;top:0;overflow:visible" width="1" height="1"><text x="417.70" y="747.10" font-family="Liberation Sans" font-size="18.5" fill="#1e1e1e" textLength="127.64" lengthAdjust="spacingAndGlyphs" xml:space="preserve">dist_w_hist(11,1)</text></svg><svg class="a" style="left:576px;top:728.0px" width="24" height="24" viewBox="0 0 24 24"><path d="M19.6,10.5 A7.4,7.4 0 1 1 12,6.2" fill="none" stroke="#1a5cb4" stroke-width="3.1"/><path d="M12.3,1.5 L17.9,6.2 L12.3,10.9 Z" fill="#1a5cb4"/></svg><svg class="a" style="left:0;top:0;overflow:visible" width="1" height="1"><text x="627.92" y="747.10" font-family="Liberation Sans" font-size="18.5" fill="#1e1e1e" textLength="148.48" lengthAdjust="spacingAndGlyphs" xml:space="preserve">Undefined address</text></svg><svg class="a" style="left:388px;top:754.0px" width="24" height="24" viewBox="0 0 24 24"><circle cx="12.1" cy="12" r="10.45" fill="#e51400"/><path d="M6.3,6.1 L17.9,17.9 M17.9,6.1 L6.3,17.9" stroke="#fff" stroke-width="3.4"/></svg><svg class="a" style="left:0;top:0;overflow:visible" width="1" height="1"><text x="417.70" y="773.15" font-family="Liberation Sans" font-size="18.5" fill="#1e1e1e" textLength="127.63" lengthAdjust="spacingAndGlyphs" xml:space="preserve">dist_w_hist(12,1)</text></svg><svg class="a" style="left:576px;top:754.0px" width="24" height="24" viewBox="0 0 24 24"><path d="M19.6,10.5 A7.4,7.4 0 1 1 12,6.2" fill="none" stroke="#1a5cb4" stroke-width="3.1"/><path d="M12.3,1.5 L17.9,6.2 L12.3,10.9 Z" fill="#1a5cb4"/></svg><svg class="a" style="left:0;top:0;overflow:visible" width="1" height="1"><text x="627.92" y="773.15" font-family="Liberation Sans" font-size="18.5" fill="#1e1e1e" textLength="148.48" lengthAdjust="spacingAndGlyphs" xml:space="preserve">Undefined address</text></svg><svg class="a" style="left:388px;top:780.0px" width="24" height="24" viewBox="0 0 24 24"><circle cx="12.1" cy="12" r="10.45" fill="#e51400"/><path d="M6.3,6.1 L17.9,17.9 M17.9,6.1 L6.3,17.9" stroke="#fff" stroke-width="3.4"/></svg><svg class="a" style="left:0;top:0;overflow:visible" width="1" height="1"><text x="417.70" y="799.20" font-family="Liberation Sans" font-size="18.5" fill="#1e1e1e" textLength="127.63" lengthAdjust="spacingAndGlyphs" xml:space="preserve">dist_w_hist(13,1)</text></svg><svg class="a" style="left:576px;top:780.0px" width="24" height="24" viewBox="0 0 24 24"><path d="M19.6,10.5 A7.4,7.4 0 1 1 12,6.2" fill="none" stroke="#1a5cb4" stroke-width="3.1"/><path d="M12.3,1.5 L17.9,6.2 L12.3,10.9 Z" fill="#1a5cb4"/></svg><svg class="a" style="left:0;top:0;overflow:visible" width="1" height="1"><text x="627.92" y="799.20" font-family="Liberation Sans" font-size="18.5" fill="#1e1e1e" textLength="148.48" lengthAdjust="spacingAndGlyphs" xml:space="preserve">Undefined address</text></svg><svg class="a" style="left:388px;top:806.0px" width="24" height="24" viewBox="0 0 24 24"><circle cx="12.1" cy="12" r="10.45" fill="#e51400"/><path d="M6.3,6.1 L17.9,17.9 M17.9,6.1 L6.3,17.9" stroke="#fff" stroke-width="3.4"/></svg><svg class="a" style="left:0;top:0;overflow:visible" width="1" height="1"><text x="417.70" y="825.25" font-family="Liberation Sans" font-size="18.5" fill="#1e1e1e" textLength="127.63" lengthAdjust="spacingAndGlyphs" xml:space="preserve">dist_w_hist(14,1)</text></svg><svg class="a" style="left:576px;top:806.0px" width="24" height="24" viewBox="0 0 24 24"><path d="M19.6,10.5 A7.4,7.4 0 1 1 12,6.2" fill="none" stroke="#1a5cb4" stroke-width="3.1"/><path d="M12.3,1.5 L17.9,6.2 L12.3,10.9 Z" fill="#1a5cb4"/></svg><svg class="a" style="left:0;top:0;overflow:visible" width="1" height="1"><text x="627.92" y="825.25" font-family="Liberation Sans" font-size="18.5" fill="#1e1e1e" textLength="148.48" lengthAdjust="spacingAndGlyphs" xml:space="preserve">Undefined address</text></svg><svg class="a" style="left:388px;top:832.0px" width="24" height="24" viewBox="0 0 24 24"><circle cx="12.1" cy="12" r="10.45" fill="#e51400"/><path d="M6.3,6.1 L17.9,17.9 M17.9,6.1 L6.3,17.9" stroke="#fff" stroke-width="3.4"/></svg><svg class="a" style="left:0;top:0;overflow:visible" width="1" height="1"><text x="417.70" y="851.30" font-family="Liberation Sans" font-size="18.5" fill="#1e1e1e" textLength="127.63" lengthAdjust="spacingAndGlyphs" xml:space="preserve">dist_w_hist(15,1)</text></svg><svg class="a" style="left:576px;top:832.0px" width="24" height="24" viewBox="0 0 24 24"><path d="M19.6,10.5 A7.4,7.4 0 1 1 12,6.2" fill="none" stroke="#1a5cb4" stroke-width="3.1"/><path d="M12.3,1.5 L17.9,6.2 L12.3,10.9 Z" fill="#1a5cb4"/></svg><svg class="a" style="left:0;top:0;overflow:visible" width="1" height="1"><text x="627.92" y="851.30" font-family="Liberation Sans" font-size="18.5" fill="#1e1e1e" textLength="148.48" lengthAdjust="spacingAndGlyphs" xml:space="preserve">Undefined address</text></svg><svg class="a" style="left:577.5px;top:875.5px" width="13" height="6.5" viewBox="0 0 13 6.5"><path d="M0,0 L13,0 L6.5,6.5 Z" fill="#000"/></svg></body></html>
